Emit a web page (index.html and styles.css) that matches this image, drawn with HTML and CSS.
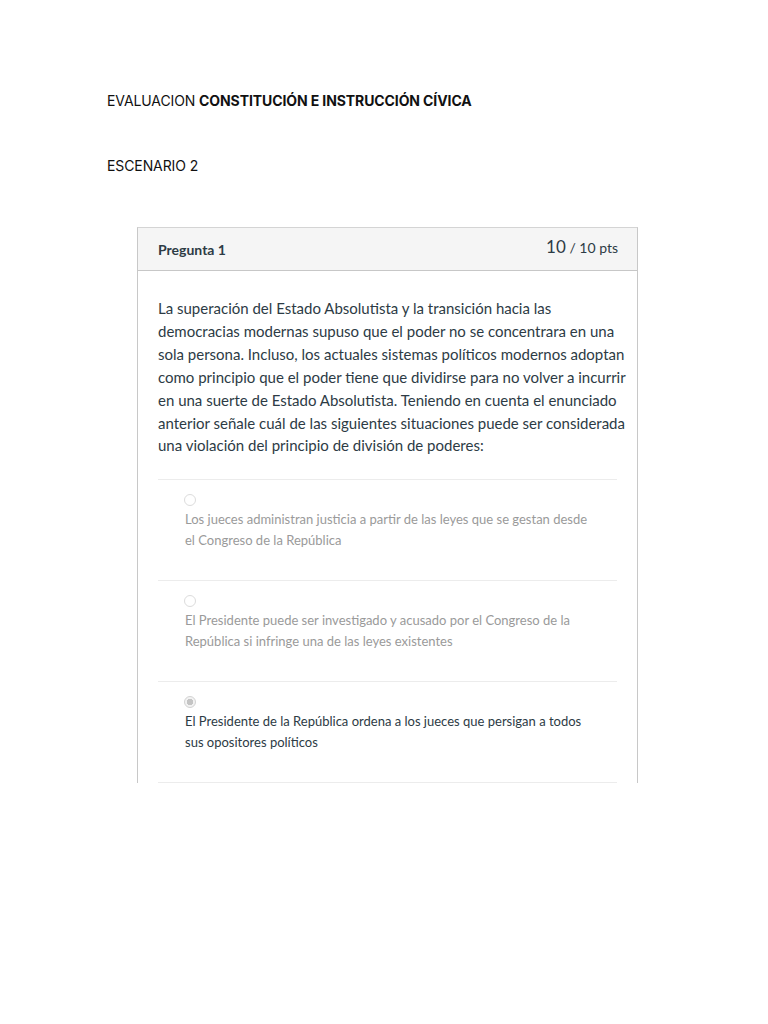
FILE: index.html
```html
<!DOCTYPE html>
<html lang="es">
<head>
<meta charset="utf-8">
<title>Evaluación</title>
<link rel="stylesheet" href="styles.css">
</head>
<body>
<div class="page">
  <p class="title">EVALUACION <strong>CONSTITUCIÓN E INSTRUCCIÓN CÍVICA</strong></p>
  <p class="scenario">ESCENARIO 2</p>

  <div class="card">
    <div class="card-header">
      <span class="q-name">Pregunta 1</span>
      <span class="q-points"><span class="big">10</span> / 10 pts</span>
    </div>
    <div class="card-body">
      <p class="question">La superación del Estado Absolutista y la transición hacia las<br>democracias modernas supuso que el poder no se concentrara en una<br>sola persona. Incluso, los actuales sistemas políticos modernos adoptan<br>como principio que el poder tiene que dividirse para no volver a incurrir<br>en una suerte de Estado Absolutista. Teniendo en cuenta el enunciado<br>anterior señale cuál de las siguientes situaciones puede ser considerada<br>una violación del principio de división de poderes:</p>
      <div class="answers">
        <div class="answer">
          <span class="radio"></span>
          <p class="answer-text">Los jueces administran justicia a partir de las leyes que se gestan desde<br>el Congreso de la República</p>
        </div>
        <div class="answer">
          <span class="radio"></span>
          <p class="answer-text">El Presidente puede ser investigado y acusado por el Congreso de la<br>República si infringe una de las leyes existentes</p>
        </div>
        <div class="answer selected">
          <span class="radio"></span>
          <p class="answer-text">El Presidente de la República ordena a los jueces que persigan a todos<br>sus opositores políticos</p>
        </div>
      </div>
    </div>
  </div>
</div>
</body>
</html>
```

FILE: styles.css
```css
html, body {
  margin: 0;
  padding: 0;
  background: #ffffff;
}

.page {
  padding: 91px 0 0 107px;
  font-family: Inter, "Liberation Sans", sans-serif;
  color: #111111;
}

.title {
  margin: 0;
  font-size: 14px;
  line-height: 20px;
  letter-spacing: -0.1px;
}

.title strong {
  font-weight: 700;
}

.scenario {
  margin: 45px 0 0 0;
  font-size: 14px;
  line-height: 20px;
  letter-spacing: -0.1px;
}

.card {
  margin: 51px 0 0 30px;
  width: 499px;
  border-left: 1px solid #c8c8c8;
  border-right: 1px solid #c8c8c8;
  border-top: 1px solid #d4d4d4;
  font-family: Lato, "Open Sans", sans-serif;
}

.card-header {
  display: flex;
  justify-content: space-between;
  align-items: center;
  height: 42px;
  padding: 0 19px 0 20px;
  background: #f5f5f5;
  border-bottom: 1px solid #c7c7c7;
}

.q-name {
  font-size: 14px;
  font-weight: 700;
  color: #2d3b45;
}

.q-points {
  font-size: 14px;
  color: #2d3b45;
  margin-top: -5px;
}

.q-points .big {
  font-size: 17px;
}

.card-body {
  padding: 26px 20px 0 20px;
}

.question {
  margin: 0;
  font-size: 15px;
  line-height: 22.9px;
  color: #2d3b45;
  white-space: nowrap;
}

.answers {
  margin-top: 22px;
}

.answer {
  border-top: 1px solid #ececec;
  padding: 14px 0 29px 27px;
  height: 57px;
}

.answer:last-child {
  border-bottom: 1px solid #ececec;
}

.radio {
  display: block;
  width: 10px;
  height: 10px;
  border: 1px solid #dcdcdc;
  border-radius: 50%;
  margin-left: -1px;
  background: #ffffff;
}

.selected .radio {
  background: radial-gradient(circle, #c4c4c4 0 3px, #f2f2f2 3.5px);
  border-color: #d2d2d2;
}

.answer-text {
  margin: 3px 0 0 0;
  font-size: 13px;
  line-height: 21px;
  color: #9a9a9a;
  white-space: nowrap;
}

.selected .answer-text {
  color: #2d3b45;
}
```
